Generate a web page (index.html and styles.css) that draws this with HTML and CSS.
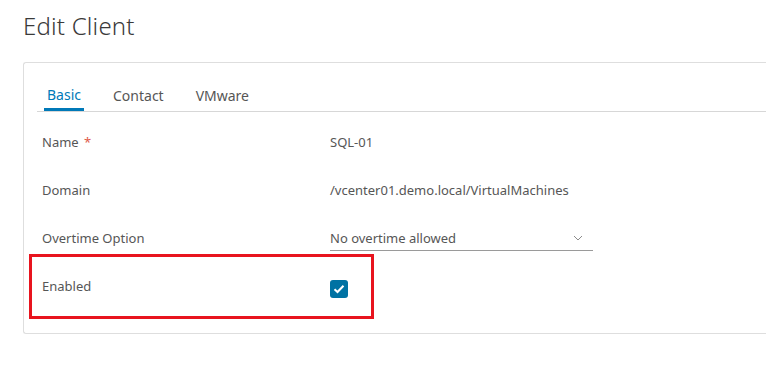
FILE: index.html
```html
<!DOCTYPE html>
<html lang="en">
<head>
  <meta charset="UTF-8">
  <title>Edit Client</title>
  <link rel="stylesheet" href="styles.css">
</head>
<body>
  <div class="page">
    <h1 class="page-title">Edit Client</h1>
    <div class="card">
      <ul class="tabs">
        <li class="tab active">Basic</li>
        <li class="tab">Contact</li>
        <li class="tab">VMware</li>
      </ul>
      <div class="form">
        <div class="form-row">
          <div class="form-label">Name <span class="required">*</span></div>
          <div class="form-value">SQL-01</div>
        </div>
        <div class="form-row">
          <div class="form-label">Domain</div>
          <div class="form-value">/vcenter01.demo.local/VirtualMachines</div>
        </div>
        <div class="form-row">
          <div class="form-label">Overtime Option</div>
          <div class="form-value">
            <div class="select">
              <span>No overtime allowed</span>
              <svg class="select-caret" width="10" height="6" viewBox="0 0 10 6"><path d="M1 1l4 4 4-4" fill="none" stroke="#8c8c8c" stroke-width="1"/></svg>
            </div>
          </div>
        </div>
        <div class="form-row highlighted">
          <div class="form-label">Enabled</div>
          <div class="form-value">
            <span class="checkbox">
              <svg width="12" height="10" viewBox="0 0 12 10"><path d="M1.5 5.2l3 2.8 6-6.3" fill="none" stroke="#fff" stroke-width="2"/></svg>
            </span>
          </div>
          <div class="highlight-box"></div>
        </div>
      </div>
    </div>
  </div>
</body>
</html>
```

FILE: styles.css
```css
body { margin: 0; background: #fff; font-family: "Noto Sans", "Liberation Sans", sans-serif; color: #565656; overflow: hidden; }
.page { padding: 12px 0 0 23px; }
.page-title { margin: 0 0 22px; font-size: 24px; font-weight: 300; color: #3a3a3a; line-height: 28px; letter-spacing: 0.2px; }
.card {
  border: 1px solid #dedede; border-right: none; border-radius: 3px 0 0 3px;
  padding: 12px 0 23px 0;
}
.tabs { list-style: none; margin: 0 0 0 13px; padding: 0 0 0 7px; display: flex; border-bottom: 1px solid #d7d7d7; }
.tab { font-size: 14px; color: #565656; height: 36px; line-height: 42px; padding: 0 3px; margin-right: 26px; box-sizing: border-box; }
.tab.active { color: #0079b8; border-bottom: 3px solid #0079b8; line-height: 39px; }
.form { padding: 6px 0 0 18px; }
.form-row { display: flex; align-items: center; height: 48px; font-size: 13px; position: relative; }
.form-label { width: 288px; }
.required { color: #e05a4a; margin-left: 2px; }
.select { width: 263px; border-bottom: 1px solid #9a9a9a; display: flex; align-items: center; justify-content: space-between; height: 25px; box-sizing: border-box; padding: 0 10px 0 0; }
.checkbox { display: flex; align-items: center; justify-content: center; width: 18px; height: 18px; background: #0072a3; border-radius: 3px; margin-top: 6px; }
.highlight-box { position: absolute; left: -13px; top: -8px; width: 345px; height: 65px; border: 3px solid #e8141e; box-sizing: border-box; }
```
